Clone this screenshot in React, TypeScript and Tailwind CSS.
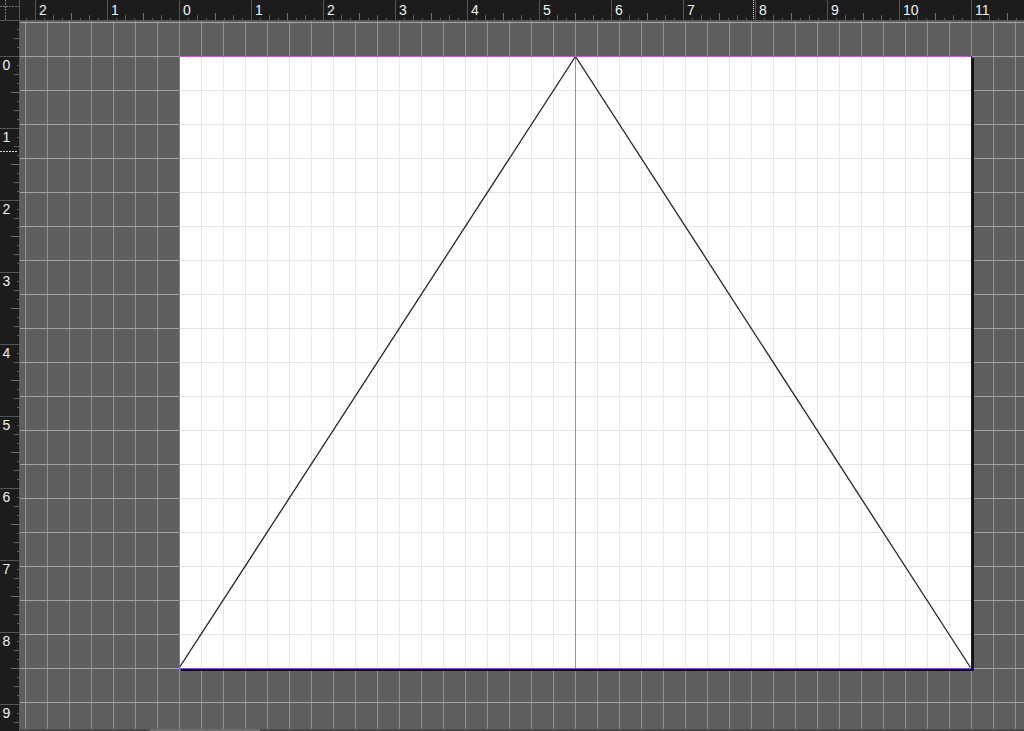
import React from "react";

const FONT = '"Liberation Sans", Arial, sans-serif';

function range(a: number, b: number): number[] {
  const out: number[] = [];
  for (let i = a; i <= b; i++) out.push(i);
  return out;
}

function mod(n: number, m: number) {
  return ((n % m) + m) % m;
}

function TopRuler() {
  const ticks = range(-18, 110).map((i) => {
    const x = 179 + 9 * i + 0.5;
    const k = mod(i, 8);
    let y1 = 18;
    let color = "#5c5c5c";
    if (k === 0) {
      y1 = 0;
      color = "#555555";
    } else if (k === 4) {
      y1 = 13;
      color = "#707070";
    } else if (k === 2 || k === 6) {
      y1 = 15;
      color = "#606060";
    }
    return <line key={i} x1={x} x2={x} y1={y1} y2={20} stroke={color} strokeWidth={1} />;
  });
  const labels = range(-2, 11).map((n) => (
    <text
      key={n}
      x={179 + 72 * n + 4}
      y={15}
      fill="#f2f2f2"
      fontSize={14}
      fontFamily={FONT}
    >
      {Math.abs(n)}
    </text>
  ));
  return (
    <svg className="block w-full h-full" viewBox="20 0 1004 20" preserveAspectRatio="none">
      {ticks}
      {labels}
      <line x1={753.5} x2={753.5} y1={0} y2={20} stroke="#e0e0e0" strokeWidth={1} strokeDasharray="1 1" />
    </svg>
  );
}

function LeftRuler() {
  const ticks = range(-4, 80).map((i) => {
    const y = 56 + 9 * i + 0.5;
    const k = mod(i, 8);
    let x1 = 17;
    let color = "#5c5c5c";
    if (k === 0) {
      x1 = 0;
      color = "#555555";
    } else if (k === 4) {
      x1 = 11;
      color = "#707070";
    } else if (k === 2 || k === 6) {
      x1 = 14;
      color = "#606060";
    }
    return <line key={i} x1={x1} x2={19} y1={y} y2={y} stroke={color} strokeWidth={1} />;
  });
  const labels = range(0, 9).map((n) => (
    <text key={n} x={2.5} y={56 + 72 * n + 14} fill="#f2f2f2" fontSize={14} fontFamily={FONT}>
      {n}
    </text>
  ));
  return (
    <svg className="block w-full h-full" viewBox="0 21 19 710" preserveAspectRatio="none">
      {ticks}
      {labels}
      <line x1={0} x2={18} y1={151.5} y2={151.5} stroke="#d8d8d8" strokeWidth={1} strokeDasharray="2 1" />
    </svg>
  );
}

function Corner() {
  return (
    <svg className="block w-full h-full" viewBox="0 0 19 20">
      <line x1={5.5} x2={5.5} y1={0} y2={20} stroke="#7a7a7a" strokeWidth={1} strokeDasharray="2 1" />
      <line x1={0} x2={19} y1={6.5} y2={6.5} stroke="#7a7a7a" strokeWidth={1} strokeDasharray="2 1" />
    </svg>
  );
}

function CanvasGrid() {
  const vs = range(-8, 40).map((k) => {
    const x = 179 + 22 * k + 0.5;
    return <line key={"v" + k} x1={x} x2={x} y1={0} y2={731} stroke="#8f8f8f" strokeWidth={1} />;
  });
  const hs = range(-2, 20).map((k) => {
    const y = 56 + 34 * k + 0.5;
    return <line key={"h" + k} x1={0} x2={1024} y1={y} y2={y} stroke="#a2a2a2" strokeWidth={1} />;
  });
  return (
    <svg className="absolute inset-0 w-full h-full" viewBox="20 21 1004 710" preserveAspectRatio="none">
      {vs}
      {hs}
    </svg>
  );
}

function Page() {
  const W = 792;
  const H = 612;
  const vs = range(1, 35).map((k) => {
    const x = 22 * k + 0.5;
    return <line key={"v" + k} x1={x} x2={x} y1={0} y2={H} stroke="#e7e7e7" strokeWidth={1} />;
  });
  const hs = range(1, 17).map((k) => {
    const y = 34 * k + 0.5;
    return <line key={"h" + k} x1={0} x2={W} y1={y} y2={y} stroke="#e4e4e4" strokeWidth={1} />;
  });
  return (
    <svg className="block w-[795px] h-[615px]" viewBox="0 0 795 615">
      {/* shadow */}
      <rect x={2} y={2} width={W + 1} height={H + 1} fill="#111111" />
      <rect x={0} y={0} width={W} height={H} fill="#ffffff" />
      {vs}
      {hs}
      {/* center guide */}
      <line x1={396.5} x2={396.5} y1={0} y2={H} stroke="#a77be0" strokeWidth={1} />
      {/* triangle */}
      <polyline
        points={`0.5,${H - 0.5} 396.5,0.5 ${W - 0.5},${H - 0.5}`}
        fill="none"
        stroke="#262626"
        strokeWidth={1.3}
        strokeLinejoin="miter"
      />
      {/* borders */}
      <line x1={0} x2={W} y1={0.5} y2={0.5} stroke="#c557d8" strokeWidth={1} />
      <line x1={0.5} x2={0.5} y1={0} y2={H} stroke="#a35ad8" strokeWidth={1} />
      <line x1={0} x2={W + 1} y1={H + 0.5} y2={H + 0.5} stroke="#9b4fd0" strokeWidth={1} />
      <line x1={W + 0.5} x2={W + 0.5} y1={0} y2={H + 1} stroke="#2a1838" strokeWidth={1} />
    </svg>
  );
}

export default function App() {
  return (
    <div className="w-[1024px] h-[731px] overflow-hidden flex flex-col bg-[#1c1c1c]">
      <div className="flex h-[21px] shrink-0">
        <div className="w-[20px] h-[21px] border-r border-b border-[#555555] bg-[#1c1c1c]">
          <Corner />
        </div>
        <div className="flex-1 h-[21px] border-b border-[#555555] bg-[#1c1c1c]">
          <TopRuler />
        </div>
      </div>
      <div className="flex flex-1 min-h-0">
        <div className="w-[20px] h-full border-r border-[#5a5a5a] bg-[#1c1c1c]">
          <LeftRuler />
        </div>
        <div className="relative flex-1 h-full bg-[#5f5f5f] overflow-hidden">
          <CanvasGrid />
          <div className="relative ml-[159px] mt-[35px] w-[795px] h-[615px]">
            <Page />
          </div>
          <div className="absolute left-0 right-0 bottom-0 h-[2px] bg-[#4a4a4a]">
            <div className="ml-[130px] w-[110px] h-[2px] bg-[#6e6e6e]" />
          </div>
        </div>
      </div>
    </div>
  );
}
